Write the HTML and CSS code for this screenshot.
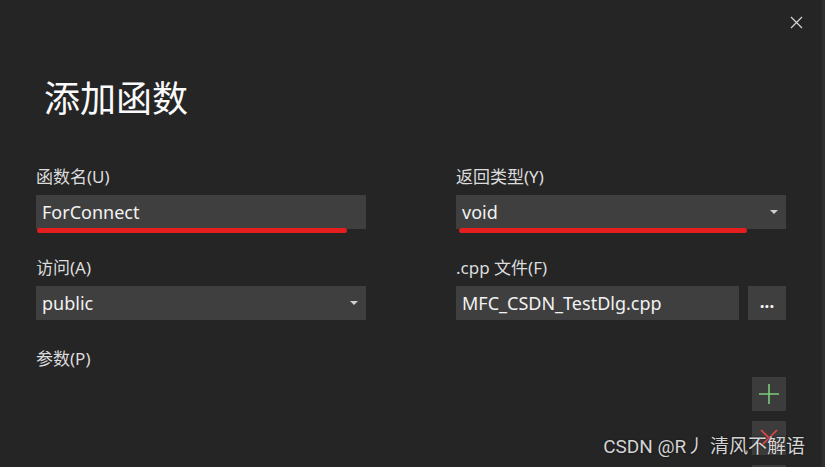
FILE: index.html
```html
<!DOCTYPE html>
<html>
<head>
  <title>添加函数</title>
  <link rel="stylesheet" href="styles.css">
</head>
<body>

  <div class="dialog">
    <div class="topbar">
      <button class="close" title="关闭">
        <svg width="13" height="13" viewBox="0 0 13 13"><path d="M1 1 L12 12 M12 1 L1 12" stroke="#d6d6d6" stroke-width="1.2" fill="none"/></svg>
      </button>
    </div>

    <h1 class="title">添加函数</h1>

    <div class="form">
      <div class="field">
        <label class="label">函数名(U)</label>
        <div class="control">ForConnect</div>
        <span class="mark mark-name"></span>
      </div>
      <div class="field">
        <label class="label">返回类型(Y)</label>
        <div class="control select">void <span class="caret"></span></div>
        <span class="mark mark-type"></span>
      </div>
      <div class="field">
        <label class="label">访问(A)</label>
        <div class="control select">public <span class="caret"></span></div>
      </div>
      <div class="field">
        <label class="label">.cpp 文件(F)</label>
        <div class="file-row">
          <div class="control">MFC_CSDN_TestDlg.cpp</div>
          <button class="browse">...</button>
        </div>
      </div>
    </div>

    <div class="params">
      <label class="label">参数(P)</label>
      <div class="tools">
        <button class="tool">
          <svg width="22" height="22" viewBox="0 0 22 22"><path d="M11 1 V21 M1 11 H21" stroke="#7ccb7c" stroke-width="1.6" fill="none"/></svg>
        </button>
        <button class="tool">
          <svg width="22" height="22" viewBox="0 0 22 22"><path d="M3 3 L19 19 M19 3 L3 19" stroke="#e04848" stroke-width="1.6" fill="none"/></svg>
        </button>
        <button class="tool tool-cut"></button>
      </div>
    </div>

    <div class="watermark">CSDN @R丿 清风不解语</div>
  </div>

</body>
</html>
```

FILE: styles.css
```css
html, body {
  margin: 0;
  padding: 0;
  height: 467px;
  overflow: hidden;
  background-color: #252526;
}
body {
  font-family: "Noto Sans", "Noto Sans CJK SC", sans-serif;
  color: #d8d8d8;
}
.dialog {
  position: relative;
  height: 467px;
  overflow: hidden;
  border-right: 3px solid #2f2f30;
  box-sizing: border-box;
}
.topbar {
  display: flex;
  justify-content: flex-end;
  padding: 16px 19px 0 0;
  height: 30px;
}
.close {
  background: none;
  border: none;
  padding: 0;
  width: 13px;
  height: 13px;
  cursor: pointer;
}
.title {
  margin: 29px 0 0 44px;
  font-family: "Noto Sans CJK SC", sans-serif;
  font-size: 36px;
  font-weight: normal;
  line-height: 43px;
  color: #fafafa;
}
.form {
  display: grid;
  grid-template-columns: 330px 330px;
  column-gap: 90px;
  row-gap: 29px;
  margin: 49px 0 0 36px;
}
.field {
  position: relative;
}
.label {
  display: block;
  font-size: 17px;
  line-height: 20px;
  margin-bottom: 8px;
  color: #dcdcdc;
}
.control {
  display: flex;
  align-items: center;
  height: 34px;
  padding: 0 6px;
  background-color: #3f3f3f;
  color: #f2f2f2;
  font-size: 18px;
  box-sizing: border-box;
}
.select {
  justify-content: space-between;
}
.caret {
  width: 0;
  height: 0;
  margin-right: 2px;
  border-left: 4px solid transparent;
  border-right: 4px solid transparent;
  border-top: 4px solid #d0d0d0;
}
.mark {
  position: absolute;
  height: 5px;
  border-radius: 3px;
  background-color: #e41e1e;
  bottom: -4px;
}
.mark-name {
  left: 1px;
  width: 310px;
}
.mark-type {
  left: 3px;
  width: 288px;
}
.file-row {
  display: flex;
  gap: 9px;
}
.file-row .control {
  flex: 1;
}
.browse {
  width: 38px;
  height: 34px;
  border: none;
  background-color: #3f3f3f;
  color: #f2f2f2;
  font-family: "Noto Sans", sans-serif;
  font-size: 17px;
  font-weight: bold;
  padding: 0 0 4px;
}
.params {
  margin: 29px 36px 0 36px;
}
.tools {
  display: flex;
  flex-direction: column;
  align-items: flex-end;
  gap: 10px;
}
.tool {
  width: 34px;
  height: 34px;
  border: none;
  padding: 0;
  background-color: #3c3c3c;
  display: flex;
  align-items: center;
  justify-content: center;
}
.tool-cut {
  height: 2px;
}
.watermark {
  position: absolute;
  right: 17px;
  bottom: 9px;
  font-family: Roboto, "Noto Sans CJK SC", sans-serif;
  font-size: 19px;
  color: #d4d4d4;
  text-shadow: 0 0 2px #111;
  white-space: nowrap;
}
```
